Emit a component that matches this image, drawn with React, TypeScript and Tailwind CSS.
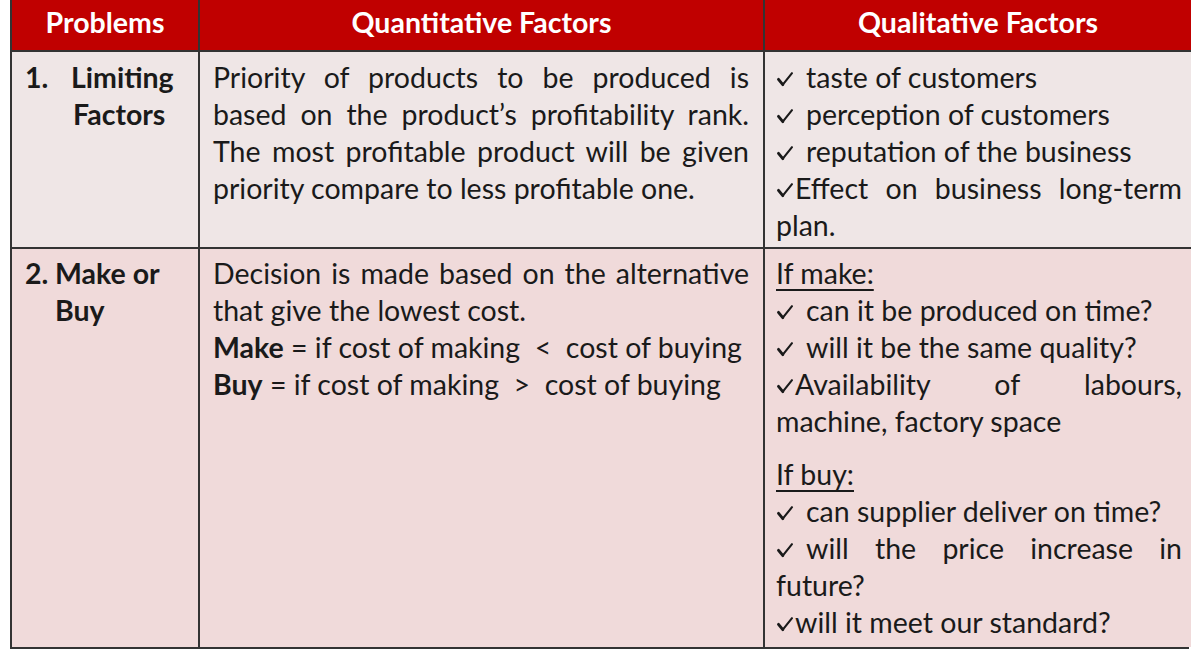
import React from "react";

const font = { fontFamily: "Lato, 'Open Sans', sans-serif" };

// a line that is stretched edge to edge, like the justified lines of the slide
function J({ children }: { children: React.ReactNode }) {
  return <p className="text-justify [text-align-last:justify]">{children}</p>;
}

// wingdings-like tick mark
function Tick({ gap }: { gap?: boolean }) {
  return (
    <svg
      viewBox="0 0 18 16"
      className={"inline-block h-[16px] w-[18px] align-[1px] " + (gap ? "mr-[12px]" : "mr-[1px]")}
      fill="none"
      stroke="#1a1a1a"
      strokeLinecap="round"
      strokeLinejoin="round"
    >
      <path d="M2.5 8.3 L6.8 13.6" strokeWidth="2.9" />
      <path d="M6.8 13.6 L16 2.2" strokeWidth="2.1" />
    </svg>
  );
}

function Item({ gap, first, rest }: { gap?: boolean; first: string; rest: string }) {
  return (
    <>
      <span className="whitespace-nowrap">
        <Tick gap={gap} />
        {first}
      </span>
      {rest ? " " + rest : ""}
    </>
  );
}

export default function App() {
  return (
    <div className="w-[1200px] h-[660px] bg-white pl-[10px] text-[28.5px] leading-[37px] text-[#1a1a1a]" style={font}>
      <div className="grid w-[1179px] grid-cols-[188px_565px_426px] border-x-2 border-b-2 border-[#333]">
        {/* header */}
        <div className="flex h-[52px] items-center justify-center border-r-2 border-b-2 border-[#333] bg-[#c00000] pb-[6px] font-bold text-white">
          Problems
        </div>
        <div className="flex h-[52px] items-center justify-center border-r-2 border-b-2 border-[#333] bg-[#c00000] pb-[6px] font-bold text-white">
          Quantitative Factors
        </div>
        <div className="flex h-[52px] items-center justify-center border-b-2 border-[#333] bg-[#c00000] pb-[6px] font-bold text-white">
          Qualitative Factors
        </div>

        {/* row 1 */}
        <div className="h-[197px] border-r-2 border-b-2 border-[#333] bg-[#efe6e6] pl-[13px] pt-[7px] font-bold">
          <div className="flex">
            <span className="w-[46px] shrink-0">1.</span>
            <span>Limiting</span>
          </div>
          <div className="pl-[48px]">Factors</div>
        </div>
        <div className="border-r-2 border-b-2 border-[#333] bg-[#efe6e6] pl-[13px] pr-[14px] pt-[7px]">
          <J>Priority of products to be produced is</J>
          <J>based on the product’s profitability rank.</J>
          <J>The most profitable product will be given</J>
          <p>priority compare to less profitable one.</p>
        </div>
        <div className="border-b-2 border-[#333] bg-[#efe6e6] pl-[11px] pr-[9px] pt-[7px]">
          <p>
            <Item gap first="taste" rest="of customers" />
          </p>
          <p>
            <Item gap first="perception" rest="of customers" />
          </p>
          <p>
            <Item gap first="reputation" rest="of the business" />
          </p>
          <J>
            <Item first="Effect" rest="on business long-term" />
          </J>
          <p>plan.</p>
        </div>

        {/* row 2 */}
        <div className="h-[398px] border-r-2 border-[#333] bg-[#f0dada] pl-[13px] pt-[6px] font-bold">
          <div className="flex">
            <span className="w-[30px] shrink-0">2.</span>
            <span>Make or</span>
          </div>
          <div className="pl-[30px]">Buy</div>
        </div>
        <div className="border-r-2 border-[#333] bg-[#f0dada] pl-[13px] pr-[14px] pt-[6px]">
          <J>Decision is made based on the alternative</J>
          <p>that give the lowest cost.</p>
          <p>
            <b>Make</b> = if cost of making&nbsp; &lt;&nbsp; cost of buying
          </p>
          <p>
            <b>Buy</b> = if cost of making&nbsp; &gt;&nbsp; cost of buying
          </p>
        </div>
        <div className="bg-[#f0dada] pl-[11px] pr-[9px] pt-[6px]">
          <p>
            <span className="underline decoration-2 underline-offset-[5px]">If make:</span>
          </p>
          <p>
            <Item gap first="can" rest="it be produced on time?" />
          </p>
          <p>
            <Item gap first="will" rest="it be the same quality?" />
          </p>
          <J>
            <Item first="Availability" rest="of labours," />
          </J>
          <p>machine, factory space</p>
          <p className="mt-[16px]">
            <span className="underline decoration-2 underline-offset-[5px]">If buy:</span>
          </p>
          <p>
            <Item gap first="can" rest="supplier deliver on time?" />
          </p>
          <J>
            <Item gap first="will" rest="the price increase in" />
          </J>
          <p>future?</p>
          <p>
            <Item first="will" rest="it meet our standard?" />
          </p>
        </div>
      </div>
    </div>
  );
}
